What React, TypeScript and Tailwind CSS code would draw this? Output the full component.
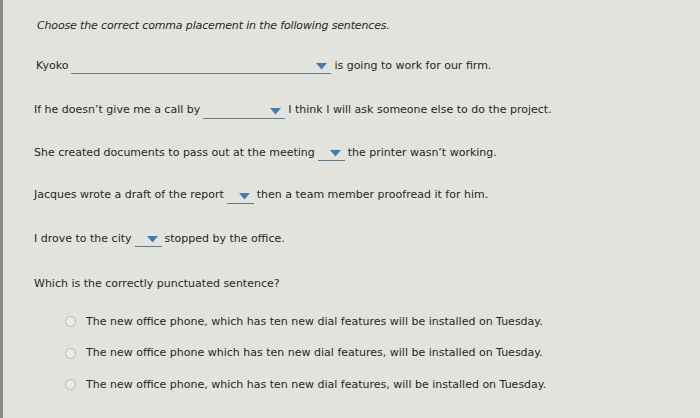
import React from "react";

// small select-like blank with a down arrow, as in the quiz form
function Blank({ width }: { width: string }) {
  return (
    <span className={`mx-[3px] inline-flex h-[15px] items-center justify-end border-b border-[#5b7d96] pr-[4px] ${width}`}>
      <svg width="11" height="7" viewBox="0 0 11 7" className="mt-[1px]">
        <polygon points="0,0 11,0 5.5,6.5" fill="#3f7cb0" />
      </svg>
    </span>
  );
}

function Radio() {
  return <span className="mr-[10px] inline-block h-[11px] w-[11px] rounded-full border-[1.5px] border-[#b9b9b0] bg-[#ecece7]" />;
}

export default function App() {
  const options = [
    "The new office phone, which has ten new dial features will be installed on Tuesday.",
    "The new office phone which has ten new dial features, will be installed on Tuesday.",
    "The new office phone, which has ten new dial features, will be installed on Tuesday.",
  ];

  return (
    <div className="h-[418px] w-[700px] overflow-hidden border-l-[3px] border-[#8c8c88] bg-[#e3e3dd] font-['DejaVu_Sans',Verdana,sans-serif] text-[11px] text-[#262626]">
      <div className="flex flex-col pl-[31px] pt-[18px]">
        <p className="pl-[3px] italic tracking-[-0.15px]">Choose the correct comma placement in the following sentences.</p>

        <div className="mt-[23px] flex items-end pl-[2px]">
          <span>Kyoko</span>
          <Blank width="w-[260px]" />
          <span>is going to work for our firm.</span>
        </div>

        <div className="mt-[28px] flex items-end">
          <span>If he doesn&rsquo;t give me a call by</span>
          <Blank width="w-[82px]" />
          <span>I think I will ask someone else to do the project.</span>
        </div>

        <div className="mt-[26px] flex items-end">
          <span>She created documents to pass out at the meeting</span>
          <Blank width="w-[27px]" />
          <span>the printer wasn&rsquo;t working.</span>
        </div>

        <div className="mt-[26px] flex items-end">
          <span>Jacques wrote a draft of the report</span>
          <Blank width="w-[27px]" />
          <span>then a team member proofread it for him.</span>
        </div>

        <div className="mt-[27px] flex items-end">
          <span>I drove to the city</span>
          <Blank width="w-[27px]" />
          <span>stopped by the office.</span>
        </div>

        <p className="mt-[29px]">Which is the correctly punctuated sentence?</p>

        <div className="mt-[21px] flex flex-col gap-[15px] pl-[31px]">
          {options.map((o) => (
            <div key={o} className="flex items-center">
              <Radio />
              <span>{o}</span>
            </div>
          ))}
        </div>
      </div>
    </div>
  );
}
